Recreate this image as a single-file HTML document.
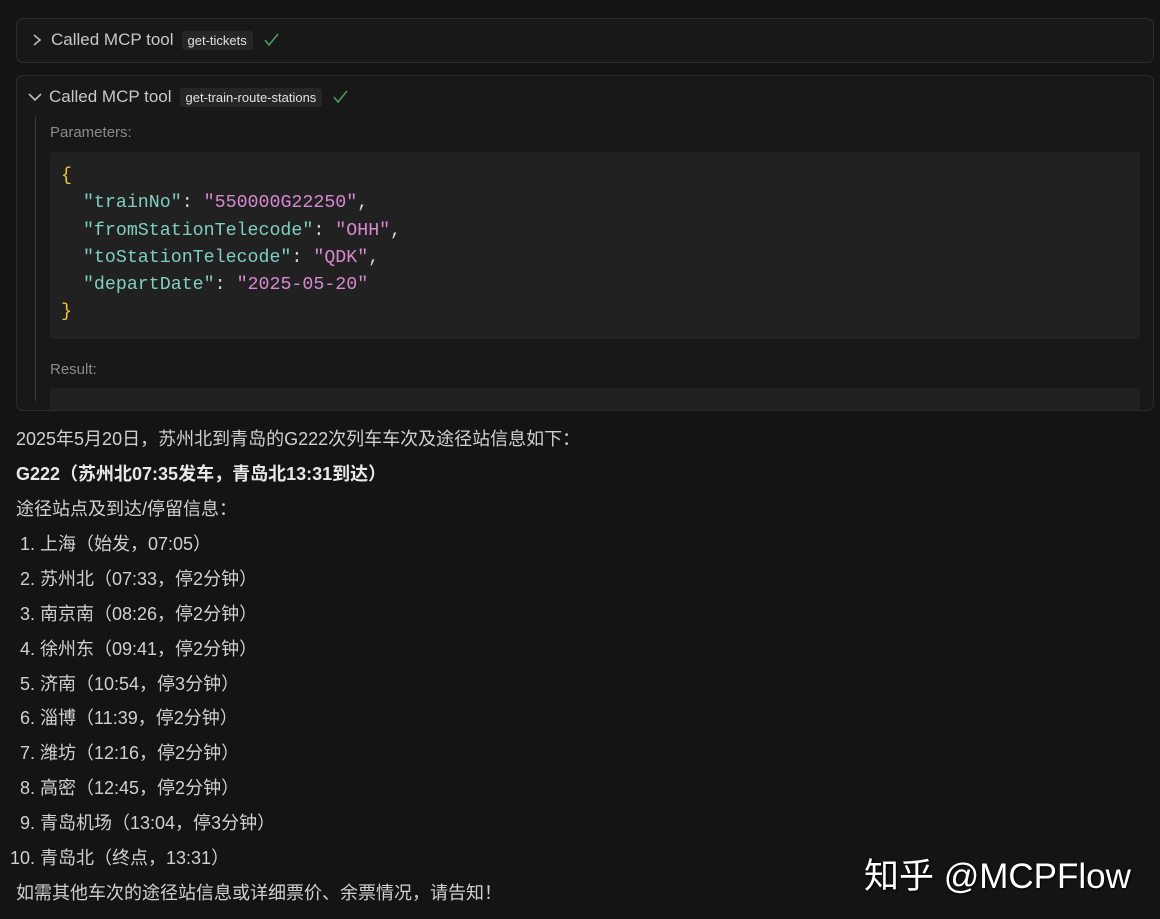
<!DOCTYPE html>
<html><head><meta charset="utf-8"><style>
body{margin:0;background:#141414;width:1160px;height:919px;overflow:hidden;font-family:"Liberation Sans","Noto Sans CJK SC",sans-serif;color:#cccccc;position:relative}
.box{position:absolute;left:16px;width:1136px;border:1px solid #2c2c2c;border-radius:7px;background:#181818;overflow:hidden}
.hdr{position:absolute;left:14px;font-size:17px;color:#c8c8c8;display:flex;align-items:center;white-space:nowrap}
.tag{background:#262626;border-radius:3px;font-size:13px;padding:2px 6px;margin-left:8px;color:#e0e0e0}
.chk{margin-left:10px}
.lbl{position:absolute;left:33px;font-size:15px;color:#8a8a8a}
.code{position:absolute;left:33px;width:1090px;background:#212121;border-radius:4px;font-family:"Liberation Mono",monospace;font-size:18.3px;line-height:27.3px;padding:11px 11px;box-sizing:border-box;white-space:pre;color:#d4d4d4}
.k{color:#7fcfc0}.s{color:#d888d0}.b{color:#f0c830}
.t{position:absolute;left:16px;font-size:18px;white-space:nowrap;color:#d0d0d0}
</style></head><body>
<div class="box" style="top:18px;height:43px">
 <div class="hdr" style="top:11px"><svg width="12" height="14" viewBox="0 0 12 14" style="margin-right:8px"><path d="M3 2l6 5-6 5" stroke="#bbb" stroke-width="1.6" fill="none"/></svg>Called MCP tool<span class="tag">get-tickets</span><svg class="chk" width="16" height="14" viewBox="0 0 16 14"><path d="M2 7l4 5 9-11" stroke="#4f9a66" stroke-width="1.5" fill="none"/></svg></div>
</div>
<div class="box" style="top:75px;height:334px">
 <div class="hdr" style="top:11px;left:10px"><svg width="16" height="14" viewBox="0 0 16 14" style="margin-right:6px"><path d="M2 4l6 6 6-6" stroke="#bbb" stroke-width="1.6" fill="none"/></svg>Called MCP tool<span class="tag">get-train-route-stations</span><svg class="chk" width="16" height="14" viewBox="0 0 16 14"><path d="M2 7l4 5 9-11" stroke="#4f9a66" stroke-width="1.5" fill="none"/></svg></div>
 <div style="position:absolute;left:18px;top:40px;width:1px;height:285px;background:#3a3a3a"></div>
 <div class="lbl" style="top:48px">Parameters:</div>
 <div class="code" style="top:76px;height:187px"><span class="b">{</span>
  <span class="k">"trainNo"</span>: <span class="s">"550000G22250"</span>,
  <span class="k">"fromStationTelecode"</span>: <span class="s">"OHH"</span>,
  <span class="k">"toStationTelecode"</span>: <span class="s">"QDK"</span>,
  <span class="k">"departDate"</span>: <span class="s">"2025-05-20"</span>
<span class="b">}</span></div>
 <div class="lbl" style="top:285px">Result:</div>
 <div class="code" style="top:312px;height:40px"></div>
</div>
<div class="t" style="top:425px">2025年5月20日，苏州北到青岛的G222次列车车次及途径站信息如下：</div>
<div class="t" style="top:460px;font-weight:bold;color:#e8e8e8">G222（苏州北07:35发车，青岛北13:31到达）</div>
<div class="t" style="top:495px">途径站点及到达/停留信息：</div>
<div class="t" style="top:530px;left:20px">1. 上海（始发，07:05）</div>
<div class="t" style="top:565px;left:20px">2. 苏州北（07:33，停2分钟）</div>
<div class="t" style="top:600px;left:20px">3. 南京南（08:26，停2分钟）</div>
<div class="t" style="top:635px;left:20px">4. 徐州东（09:41，停2分钟）</div>
<div class="t" style="top:670px;left:20px">5. 济南（10:54，停3分钟）</div>
<div class="t" style="top:704px;left:20px">6. 淄博（11:39，停2分钟）</div>
<div class="t" style="top:739px;left:20px">7. 潍坊（12:16，停2分钟）</div>
<div class="t" style="top:774px;left:20px">8. 高密（12:45，停2分钟）</div>
<div class="t" style="top:809px;left:20px">9. 青岛机场（13:04，停3分钟）</div>
<div class="t" style="top:844px;left:10px">10. 青岛北（终点，13:31）</div>
<div class="t" style="top:879px">如需其他车次的途径站信息或详细票价、余票情况，请告知！</div>
<div style="position:absolute;left:864px;top:848px;font-size:35px;color:#fff;white-space:nowrap;text-shadow:1px 1px 2px #000">知乎 @MCPFlow</div>
</body></html>
